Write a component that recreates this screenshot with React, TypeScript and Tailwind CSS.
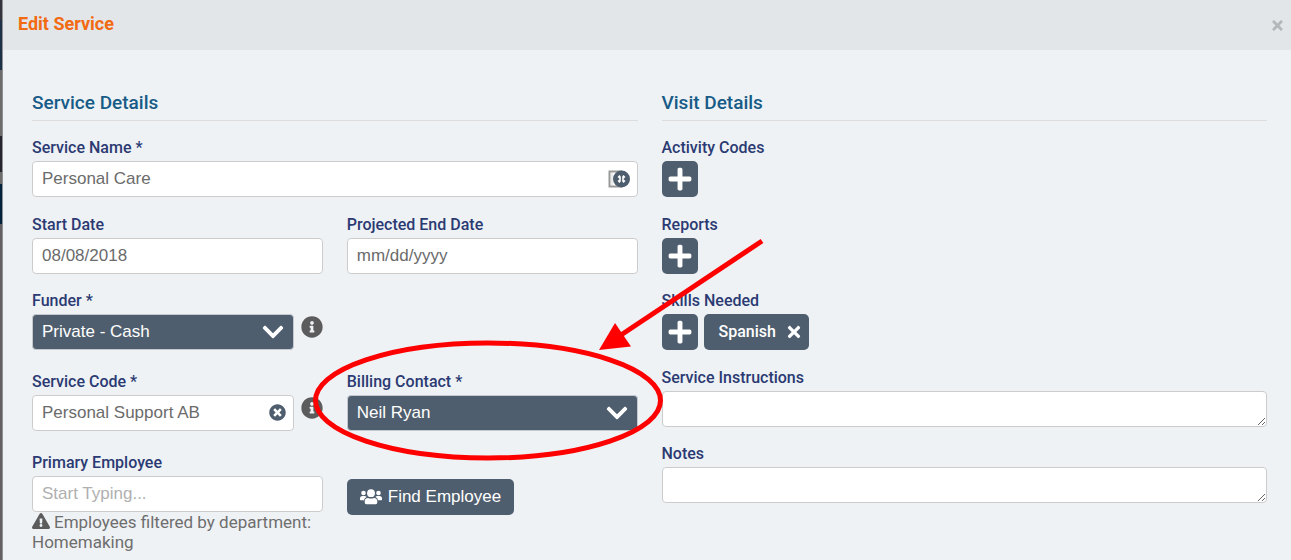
import React from 'react';
import {
  FaChevronDown,
  FaExclamationTriangle,
  FaInfoCircle,
  FaPlus,
  FaTimes,
  FaTimesCircle
} from 'react-icons/fa';

const labelClass = "block h-6 text-base leading-[22px] font-medium text-[#2b3a72]";
const inputClass = "block w-full h-9 rounded border border-[#cccccc] bg-white px-[9px] text-[17px] leading-6 text-[#6b6b6b] placeholder:text-[#b0b0b0] font-['Liberation_Sans',Arial,sans-serif] outline-none";
const darkButton = "h-9 rounded-[5px] bg-[#4f5e6e] text-white flex items-center";

function SectionTitle({ children }: { children: React.ReactNode }) {
  return (
    <h2 className="h-9 mb-4 border-b border-[#dddddd] text-[19px] leading-9 font-medium text-[#175b87]">
      {children}
    </h2>
  );
}

function Dropdown({ id, value }: { id: string; value: string }) {
  return (
    <div className="relative flex-1">
      <select
        id={id}
        className="block w-full h-9 appearance-none rounded border border-[#c4c9ce] bg-[#4f5e6e] px-[9px] text-[17px] text-white font-['Liberation_Sans',Arial,sans-serif] outline-none"
      >
        <option>{value}</option>
      </select>
      <FaChevronDown size={24} className="absolute right-[9px] top-[6px] text-white pointer-events-none" />
    </div>
  );
}

function InfoButton() {
  return (
    <button type="button" aria-label="More information" className="mt-[2px] self-start">
      <FaInfoCircle size={22} className="text-[#5c5c5c]" />
    </button>
  );
}

function AddButton({ label }: { label: string }) {
  return (
    <button type="button" aria-label={label} className={`${darkButton} w-9 justify-center`}>
      <FaPlus size={26} />
    </button>
  );
}

function PeopleIcon() {
  return (
    <svg width="22" height="16" viewBox="0 0 22 16" fill="currentColor" aria-hidden="true">
      <circle cx="3.500" cy="4" r="2.300" />
      <circle cx="18.500" cy="4" r="2.300" />
      <path d="M0 10.500V9.500Q0 7 2.500 7H4.500Q6 7 6.600 8Q4.400 9 4 11.200H.8Q0 11.200 0 10.500Z" />
      <path d="M22 10.500V9.500Q22 7 19.500 7H17.500Q16 7 15.400 8Q17.600 9 18 11.200H21.200Q22 11.200 22 10.500Z" />
      <circle cx="11" cy="4.200" r="3.900" />
      <path d="M4.700 13.500V12.500Q4.700 9 8 9Q11 10.200 14 9Q17.300 9 17.300 12.500V13.500Q17.300 15.200 15.600 15.200H6.400Q4.700 15.200 4.700 13.500Z" />
    </svg>
  );
}

// Strip of the page that stays visible behind the dialog
function Backdrop() {
  return (
    <div className="w-[3px] flex-shrink-0 flex flex-col border-r border-[#8d9194] bg-[#626063]">
      <div className="h-5 bg-[#34343c]" />
      <div className="h-[50px] bg-[#1d3149]" />
      <div className="h-[66px] bg-[#6c6c6c]" />
      <div className="h-9 bg-[#25262d]" />
      <div className="h-3 bg-[#6c6c6c]" />
      <div className="h-10 bg-[#02233b]" />
    </div>
  );
}

// Red ellipse and arrow pointing at the billing contact
function Annotation() {
  return (
    <svg
      width="460"
      height="230"
      viewBox="0 0 460 230"
      className="absolute left-[307px] top-[236px] pointer-events-none"
      aria-hidden="true"
    >
      <ellipse cx="178" cy="164.500" rx="172.500" ry="57.500" fill="none" stroke="#ff0000" strokeWidth="5" />
      <path d="M452 5L308 101" stroke="#ff0000" strokeWidth="5" />
      <path d="M289 114L305 87L321 110.500Z" fill="#ff0000" />
    </svg>
  );
}

export default function EditService() {
  return (
    <main className="min-h-screen flex bg-[#eef2f5] font-[Roboto,sans-serif]">
      <Backdrop />

      <div className="relative flex-1">
        <header className="h-[50px] flex items-center justify-between bg-[#e2e6e9] pl-[15px] pr-[6px]">
          <h1 className="text-[18px] leading-6 font-bold text-[#f26a11] pb-[2px]">Edit Service</h1>
          <button type="button" aria-label="Close" className="text-[#b3b7b9]">
            <FaTimes size={15} />
          </button>
        </header>

        <form className="grid grid-cols-2 gap-6 pl-[29px] pr-6 pt-[35px]">
          {/* Service Details */}
          <section>
            <SectionTitle>Service Details</SectionTitle>

            <div className="mb-[17px]">
              <label htmlFor="name" className={labelClass}>Service Name *</label>
              <div className="relative">
                <input id="name" className={inputClass} defaultValue="Personal Care" />
                <svg width="22" height="18" viewBox="0 0 22 18" className="absolute right-2 top-[9px]">
                  <path d="M14 1.500H1.500V16.500H14" fill="none" stroke="#999999" strokeWidth="2" />
                  <path d="M4 3V15" stroke="#d9d9d9" strokeWidth="1" />
                  <circle cx="13.500" cy="9" r="8.500" fill="#4f5e6e" />
                  <path d="M10.500 6L16.500 12M16.500 6L10.500 12" fill="none" stroke="#ffffff" strokeWidth="2.600" />
                  <path d="M13.500 5V13" stroke="#4f5e6e" strokeWidth="1.400" />
                </svg>
              </div>
            </div>

            <div className="grid grid-cols-2 gap-x-6">
              <div className="mb-4">
                <label htmlFor="start" className={labelClass}>Start Date</label>
                <input id="start" className={inputClass} defaultValue="08/08/2018" />
              </div>
              <div className="mb-4">
                <label htmlFor="end" className={labelClass}>Projected End Date</label>
                <input id="end" className={inputClass} defaultValue="mm/dd/yyyy" />
              </div>

              <div className="mb-[21px] col-start-1">
                <label htmlFor="funder" className={labelClass}>Funder *</label>
                <div className="flex gap-[7px]">
                  <Dropdown id="funder" value="Private - Cash" />
                  <InfoButton />
                </div>
              </div>

              <div className="mb-[21px] col-start-1">
                <label htmlFor="code" className={labelClass}>Service Code *</label>
                <div className="flex gap-[7px]">
                  <div className="relative flex-1">
                    <input id="code" className={inputClass} defaultValue="Personal Support AB" />
                    <button type="button" aria-label="Clear service code" className="absolute right-2 top-[9px]">
                      <FaTimesCircle size={17} className="text-[#4f5e6e]" />
                    </button>
                  </div>
                  <InfoButton />
                </div>
              </div>
              <div className="mb-[21px]">
                <label htmlFor="billing" className={labelClass}>Billing Contact *</label>
                <Dropdown id="billing" value="Neil Ryan" />
              </div>

              <div>
                <label htmlFor="employee" className={labelClass}>Primary Employee</label>
                <input id="employee" className={inputClass} placeholder="Start Typing..." />
                <p className="text-[17px] leading-5 text-[#6e6e6e]">
                  <FaExclamationTriangle size={18} className="inline align-[-2px] mr-1 text-[#5c5c5c]" />
                  Employees filtered by department: Homemaking
                </p>
              </div>
              <div className="pt-[27px]">
                <button type="button" className={`${darkButton} gap-[6px] px-[13px] text-[17px] font-['Liberation_Sans',Arial,sans-serif]`}>
                  <PeopleIcon />
                  Find Employee
                </button>
              </div>
            </div>
          </section>

          {/* Visit Details */}
          <section>
            <SectionTitle>Visit Details</SectionTitle>

            <div className="mb-[17px]">
              <h3 className={labelClass}>Activity Codes</h3>
              <AddButton label="Add activity code" />
            </div>

            <div className="mb-4">
              <h3 className={labelClass}>Reports</h3>
              <AddButton label="Add report" />
            </div>

            <div className="mb-[17px]">
              <h3 className={labelClass}>Skills Needed</h3>
              <div className="flex gap-[6px]">
                <AddButton label="Add skill" />
                <button type="button" className={`${darkButton} gap-[9px] pl-[15px] pr-[6px] text-base font-medium`}>
                  Spanish
                  <FaTimes size={18} />
                </button>
              </div>
            </div>

            <div className="mb-4">
              <label htmlFor="instructions" className={labelClass}>Service Instructions</label>
              <textarea id="instructions" rows={1} className={`${inputClass} py-1`} />
            </div>

            <div>
              <label htmlFor="notes" className={labelClass}>Notes</label>
              <textarea id="notes" rows={1} className={`${inputClass} py-1`} />
            </div>
          </section>
        </form>

        <Annotation />
      </div>
    </main>
  );
}
